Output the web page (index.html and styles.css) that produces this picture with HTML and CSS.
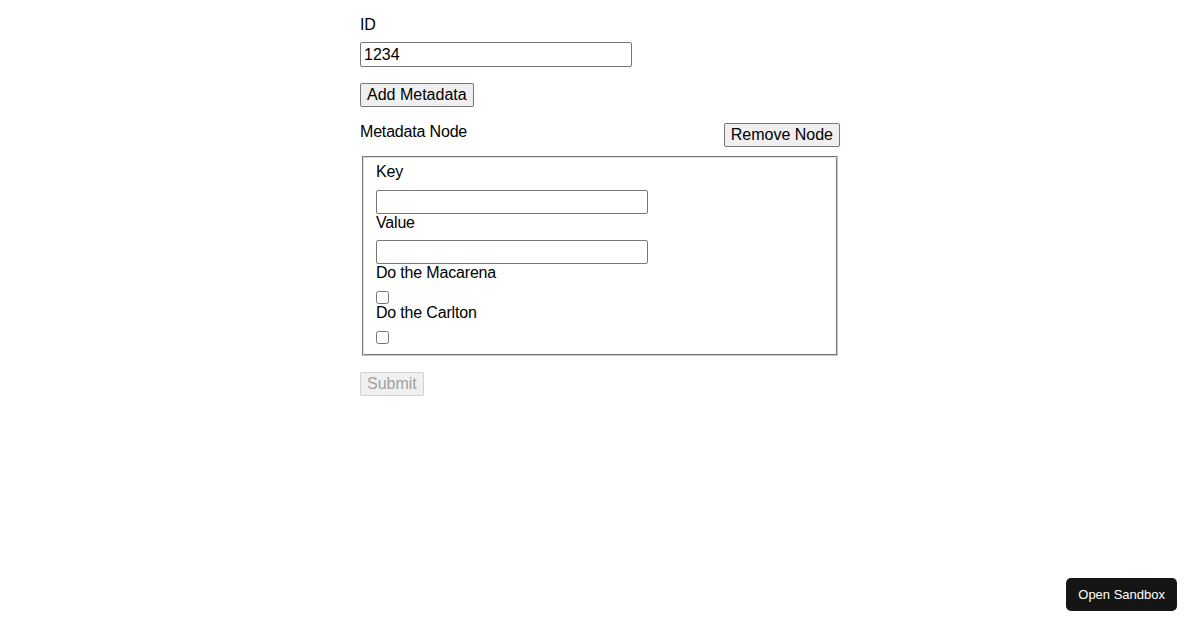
FILE: index.html
```html
<!DOCTYPE html>
<html>
<head>
<meta charset="utf-8">
<link rel="stylesheet" href="styles.css">
</head>
<body>
<form class="form">
  <div class="field">
    <label class="label" for="id">ID</label>
    <input class="text-input" id="id" type="text" value="1234">
  </div>
  <div class="field">
    <button type="button" class="btn">Add Metadata</button>
  </div>
  <div class="node-head">
    <span class="node-title">Metadata Node</span>
    <button type="button" class="btn">Remove Node</button>
  </div>
  <fieldset class="node">
    <label class="label label-first">Key</label>
    <input class="text-input" type="text">
    <label class="label">Value</label>
    <input class="text-input" type="text">
    <label class="label label-check">Do the Macarena</label>
    <input class="check" type="checkbox">
    <label class="label label-check">Do the Carlton</label>
    <input class="check" type="checkbox">
  </fieldset>
  <button type="submit" class="btn" disabled>Submit</button>
</form>
<button type="button" class="sandbox">Open Sandbox</button>
</body>
</html>
```

FILE: styles.css
```css
html, body {
  margin: 0;
  padding: 0;
  background: #fff;
}
body {
  font-family: "Liberation Sans", Arial, sans-serif;
  font-size: 16px;
  color: #000;
}
.form {
  width: 480px;
  margin: 0 auto;
  padding-top: 16px;
}
.field {
  margin-bottom: 16px;
}
.label {
  display: block;
  line-height: 18px;
  margin-bottom: 8px;
  letter-spacing: -0.18px;
}
.label-first {
  margin-bottom: 9px;
}
.label-check {
  margin-bottom: 9px;
}
.text-input {
  display: block;
  box-sizing: border-box;
  width: 272px;
  height: 25px;
  font-family: "Liberation Sans", Arial, sans-serif;
  font-size: 16px;
  padding: 1px 3px;
  border: 1px solid #767676;
  border-radius: 2px;
  margin: 0;
}
.node .text-input {
  height: 24px;
}
.btn {
  font-family: "Liberation Sans", Arial, sans-serif;
  font-size: 16px;
  line-height: 18px;
  padding: 2px 6px;
  border: 1px solid #767676;
  border-radius: 2px;
  background: #efefef;
  color: #000;
  margin: 0;
}
.btn:disabled {
  color: #a0a0a0;
  border-color: #d0d0d0;
  background: #f0f0f0;
}
.node-head {
  display: flex;
  justify-content: space-between;
  align-items: flex-start;
  margin-bottom: 9px;
}
.node-title {
  line-height: 18px;
  letter-spacing: -0.18px;
}
.node {
  margin: 0 2px 16px 2px;
  padding: 6px 13px 11px 13px;
  border: 1px solid;
  border-color: #767676 #c8c8c8 #c8c8c8 #767676;
  box-shadow: inset 1px 1px 0 #dedede, inset -1px -1px 0 #767676;
}
.check {
  display: block;
  width: 13px;
  height: 13px;
  margin: 0;
}
.sandbox {
  position: fixed;
  right: 23px;
  bottom: 19px;
  height: 33px;
  padding: 0 12px;
  background: #151515;
  color: #fff;
  border: none;
  border-radius: 5px;
  font-family: "Liberation Sans", Arial, sans-serif;
  font-size: 13px;
}
```
